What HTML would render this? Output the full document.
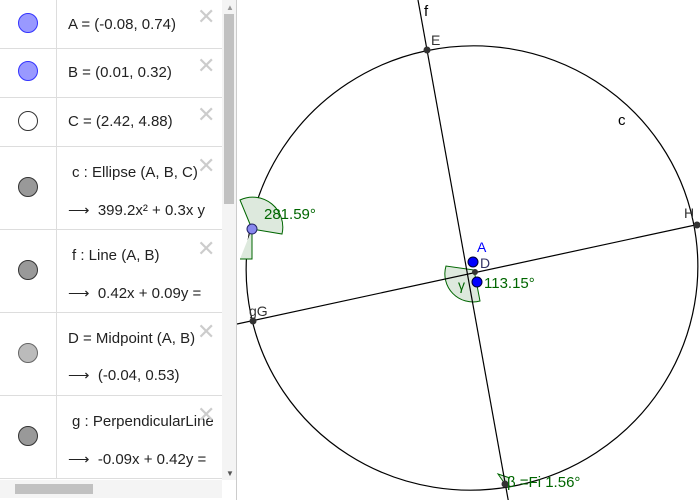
<html><head><style>
html,body{margin:0;width:700px;height:500px;overflow:hidden}
body{background:#fff;font-family:"Liberation Sans",sans-serif;position:relative}
#p{position:absolute;left:0;top:0;width:222px;height:480px;overflow:hidden}
.r{position:absolute;left:0;width:222px;border-bottom:1px solid #ddd;overflow:hidden}
.ic{position:absolute;left:0;top:0;bottom:0;width:56px;border-right:1px solid #ddd}
.dot{position:absolute;left:18px;width:18px;height:18px;border-radius:50%}
.t{position:absolute;left:68px;font-size:15px;color:#222;white-space:nowrap}
.t2{position:absolute;left:72px;font-size:15px;color:#222;white-space:nowrap}
.x{position:absolute;left:197px;font-size:22px;line-height:22px;color:#ccc;font-weight:300}
</style></head><body>
<div id="p">
<div class="r" style="top:0;height:48px"><div class="ic"><div class="dot" style="top:13px;background:#99f;border:1px solid #33f"></div></div><div class="t" style="top:16px">A = (-0.08, 0.74)</div><div class="x" style="top:6px">✕</div></div>
<div class="r" style="top:49px;height:48px"><div class="ic"><div class="dot" style="top:12px;background:#99f;border:1px solid #33f"></div></div><div class="t" style="top:15px">B = (0.01, 0.32)</div><div class="x" style="top:6px">✕</div></div>
<div class="r" style="top:98px;height:48px"><div class="ic"><div class="dot" style="top:13px;background:#fff;border:1px solid #333"></div></div><div class="t" style="top:15px">C = (2.42, 4.88)</div><div class="x" style="top:6px">✕</div></div>
<div class="r" style="top:147px;height:82px"><div class="ic"><div class="dot" style="top:30px;background:#999;border:1px solid #333"></div></div><div class="t2" style="top:17px">c : Ellipse (A, B, C)</div><div class="t" style="top:54px">⟶&nbsp; 399.2x² + 0.3x y</div><div class="x" style="top:8px">✕</div></div>
<div class="r" style="top:230px;height:82px"><div class="ic"><div class="dot" style="top:30px;background:#999;border:1px solid #333"></div></div><div class="t2" style="top:17px">f : Line (A, B)</div><div class="t" style="top:54px">⟶&nbsp; 0.42x + 0.09y =</div><div class="x" style="top:8px">✕</div></div>
<div class="r" style="top:313px;height:82px"><div class="ic"><div class="dot" style="top:30px;background:#bbb;border:1px solid #666"></div></div><div class="t" style="top:17px">D = Midpoint (A, B)</div><div class="t" style="top:53px">⟶&nbsp; (-0.04, 0.53)</div><div class="x" style="top:8px">✕</div></div>
<div class="r" style="top:396px;height:82px"><div class="ic"><div class="dot" style="top:30px;background:#999;border:1px solid #333"></div></div><div class="t2" style="top:17px">g : PerpendicularLine</div><div class="t" style="top:54px">⟶&nbsp; -0.09x + 0.42y =</div><div class="x" style="top:8px">✕</div></div>
</div>
<div style="position:absolute;left:222px;top:0;width:14px;height:480px;background:#f4f4f4"></div>
<div style="position:absolute;left:224px;top:14px;width:10px;height:190px;background:#c1c1c1"></div>
<div style="position:absolute;left:226px;top:3px;font-size:8px;color:#999">▲</div>
<div style="position:absolute;left:226px;top:469px;font-size:8px;color:#555">▼</div>
<div style="position:absolute;left:0;top:480px;width:222px;height:18px;background:#f4f4f4"></div>
<div style="position:absolute;left:15px;top:484px;width:78px;height:10px;background:#c1c1c1"></div>
<div style="position:absolute;left:236px;top:0;width:1px;height:500px;background:#ccc"></div>
<svg style="position:absolute;left:0;top:0" width="700" height="500">
<defs><clipPath id="c"><rect x="237" y="0" width="463" height="500"/></clipPath></defs>
<g clip-path="url(#c)" font-family="Liberation Sans,sans-serif">
<ellipse cx="472" cy="268" rx="226" ry="222" transform="rotate(-12 472 268)" fill="none" stroke="#000" stroke-width="1.2"/>
<path d="M252 229 L282 234 A30 30 0 0 0 240 200 Z" fill="#dde9dd" stroke="#060" stroke-width="1"/>
<path d="M252 229 L252 259 L240 259" fill="#dde9dd" stroke="#060"/>
<path d="M474 270 L446 266 A28 28 0 0 0 480 301 Z" fill="#dde9dd" stroke="#060"/>
<path d="M505 484 L498 474 L510 478" fill="#dde9dd" stroke="#060"/>
<line x1="418" y1="0" x2="510" y2="510" stroke="#000" stroke-width="1.2"/>
<line x1="237" y1="324" x2="700" y2="224" stroke="#000" stroke-width="1.2"/>
<circle cx="427" cy="50" r="3.5" fill="#333"/>
<circle cx="697" cy="225" r="3.5" fill="#333"/>
<circle cx="253" cy="321" r="3.5" fill="#333"/>
<circle cx="505" cy="484" r="3.5" fill="#333"/>
<circle cx="252" cy="229" r="5" fill="#88e" stroke="#226"/>
<circle cx="473" cy="262" r="5" fill="#00f" stroke="#003"/>
<circle cx="477" cy="282" r="5" fill="#00f" stroke="#003"/>
<circle cx="475" cy="272" r="3" fill="#333"/>
<text x="424" y="16" font-size="15" fill="#000">f</text>
<text x="431" y="45" font-size="14" fill="#333">E</text>
<text x="618" y="125" font-size="15" fill="#000">c</text>
<text x="684" y="218" font-size="14" fill="#333">H</text>
<text x="249" y="316" font-size="14" fill="#333">gG</text>
<text x="477" y="252" font-size="14" fill="#00f">A</text>
<text x="480" y="268" font-size="14" fill="#336">D</text>
<text x="264" y="219" font-size="15" fill="#060">281.59°</text>
<text x="484" y="288" font-size="15" fill="#060">113.15°</text>
<text x="458" y="290" font-size="14" fill="#060">γ</text>
<text x="507" y="487" font-size="15" fill="#060">β =Fi 1.56°</text>
</g></svg>
</body></html>
